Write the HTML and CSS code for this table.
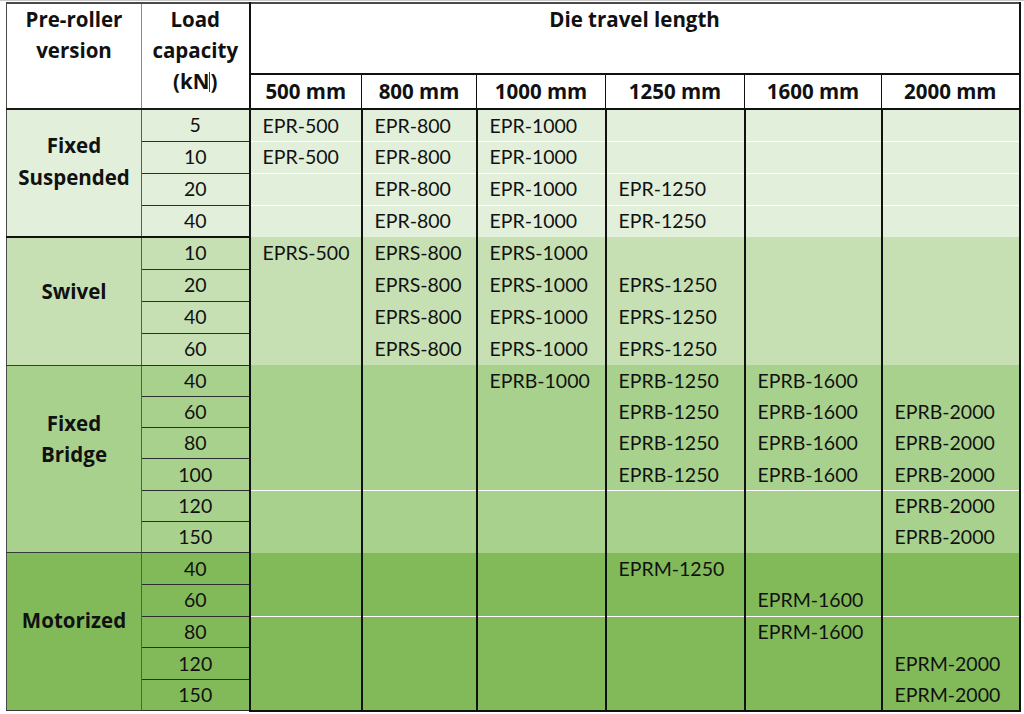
FILE: index.html
```html
<!DOCTYPE html>
<html lang="en">
<head>
<meta charset="utf-8">
<title>Pre-roller versions</title>
<link rel="stylesheet" href="styles.css">
</head>
<body>
<table class="spec">
  <colgroup>
    <col class="w-ver"><col class="w-load"><col class="w-500"><col class="w-800"><col class="w-1000"><col class="w-1250"><col class="w-1600"><col class="w-2000">
  </colgroup>
  <thead>
    <tr class="h-top">
      <th class="ver" rowspan="2">Pre-roller<br>version</th>
      <th class="cap" rowspan="2">Load<br>capacity<br>(kN<span class="caret"></span>)</th>
      <th class="die" colspan="6">Die travel length</th>
    </tr>
    <tr class="h-sub">
      <th class="sub">500 mm</th><th class="sub">800 mm</th><th class="sub">1000 mm</th><th class="sub">1250 mm</th><th class="sub">1600 mm</th><th class="sub">2000 mm</th>
    </tr>
  </thead>
  <tbody class="g1">
    <tr><th class="grp p1" rowspan="4">Fixed<br>Suspended</th><td class="ld">5</td><td class="d">EPR-500</td><td class="d">EPR-800</td><td class="d">EPR-1000</td><td class="d"></td><td class="d"></td><td class="d"></td></tr>
    <tr class="sep"><td class="ld">10</td><td class="d">EPR-500</td><td class="d">EPR-800</td><td class="d">EPR-1000</td><td class="d"></td><td class="d"></td><td class="d"></td></tr>
    <tr class="sep"><td class="ld">20</td><td class="d"></td><td class="d">EPR-800</td><td class="d">EPR-1000</td><td class="d">EPR-1250</td><td class="d"></td><td class="d"></td></tr>
    <tr class="sep"><td class="ld">40</td><td class="d"></td><td class="d">EPR-800</td><td class="d">EPR-1000</td><td class="d">EPR-1250</td><td class="d"></td><td class="d"></td></tr>
  </tbody>
  <tbody class="g2">
    <tr><th class="grp p2" rowspan="4">Swivel</th><td class="ld">10</td><td class="d">EPRS-500</td><td class="d">EPRS-800</td><td class="d">EPRS-1000</td><td class="d"></td><td class="d"></td><td class="d"></td></tr>
    <tr><td class="ld">20</td><td class="d"></td><td class="d">EPRS-800</td><td class="d">EPRS-1000</td><td class="d">EPRS-1250</td><td class="d"></td><td class="d"></td></tr>
    <tr><td class="ld">40</td><td class="d"></td><td class="d">EPRS-800</td><td class="d">EPRS-1000</td><td class="d">EPRS-1250</td><td class="d"></td><td class="d"></td></tr>
    <tr><td class="ld">60</td><td class="d"></td><td class="d">EPRS-800</td><td class="d">EPRS-1000</td><td class="d">EPRS-1250</td><td class="d"></td><td class="d"></td></tr>
  </tbody>
  <tbody class="g3">
    <tr><th class="grp p3" rowspan="6">Fixed<br>Bridge</th><td class="ld">40</td><td class="d"></td><td class="d"></td><td class="d">EPRB-1000</td><td class="d">EPRB-1250</td><td class="d">EPRB-1600</td><td class="d"></td></tr>
    <tr><td class="ld">60</td><td class="d"></td><td class="d"></td><td class="d"></td><td class="d">EPRB-1250</td><td class="d">EPRB-1600</td><td class="d">EPRB-2000</td></tr>
    <tr><td class="ld">80</td><td class="d"></td><td class="d"></td><td class="d"></td><td class="d">EPRB-1250</td><td class="d">EPRB-1600</td><td class="d">EPRB-2000</td></tr>
    <tr><td class="ld">100</td><td class="d"></td><td class="d"></td><td class="d"></td><td class="d">EPRB-1250</td><td class="d">EPRB-1600</td><td class="d">EPRB-2000</td></tr>
    <tr class="sep"><td class="ld">120</td><td class="d"></td><td class="d"></td><td class="d"></td><td class="d"></td><td class="d"></td><td class="d">EPRB-2000</td></tr>
    <tr><td class="ld">150</td><td class="d"></td><td class="d"></td><td class="d"></td><td class="d"></td><td class="d"></td><td class="d">EPRB-2000</td></tr>
  </tbody>
  <tbody class="g4">
    <tr><th class="grp p4" rowspan="5">Motorized</th><td class="ld">40</td><td class="d"></td><td class="d"></td><td class="d"></td><td class="d">EPRM-1250</td><td class="d"></td><td class="d"></td></tr>
    <tr><td class="ld">60</td><td class="d"></td><td class="d"></td><td class="d"></td><td class="d"></td><td class="d">EPRM-1600</td><td class="d"></td></tr>
    <tr class="sep"><td class="ld">80</td><td class="d"></td><td class="d"></td><td class="d"></td><td class="d"></td><td class="d">EPRM-1600</td><td class="d"></td></tr>
    <tr><td class="ld">120</td><td class="d"></td><td class="d"></td><td class="d"></td><td class="d"></td><td class="d"></td><td class="d">EPRM-2000</td></tr>
    <tr><td class="ld">150</td><td class="d"></td><td class="d"></td><td class="d"></td><td class="d"></td><td class="d"></td><td class="d">EPRM-2000</td></tr>
  </tbody>
</table>
</body>
</html>
```

FILE: styles.css
```css
html, body {
  margin: 0;
  padding: 0;
  background: #ffffff;
}

body {
  border-top: 1px solid #c9c9c9;
  font-family: Lato, "Open Sans", "Liberation Sans", sans-serif;
  color: #111111;
}

.spec {
  border-collapse: collapse;
  table-layout: fixed;
  width: 1014px;
  margin: 1px 0 0 6px;
}

.w-ver { width: 135px; }
.w-load { width: 108px; }
.w-500 { width: 112px; }
.w-800 { width: 115px; }
.w-1000 { width: 129px; }
.w-1250 { width: 139px; }
.w-1600 { width: 137px; }
.w-2000 { width: 138px; }

th, td {
  padding: 0;
  font-size: 19.5px;
  line-height: 20px;
}

/* header */
thead th {
  background: #ffffff;
  font-family: "Open Sans", Lato, sans-serif;
  font-weight: 700;
  font-size: 20.5px;
  line-height: 31px;
  text-align: center;
  color: #111;
}

.h-top { height: 71px; }
.h-sub { height: 35px; }

.ver, .cap {
  vertical-align: top;
  border-top: 2px solid #4a4a4a;
  border-bottom: 2px solid #1a1a1a;
}

.ver {
  border-left: 1px solid #4a4a4a;
  border-right: 1px solid #8a8a8a;
}

.cap {
  border-right: 2px solid #111;
}

.die {
  vertical-align: top;
  border-top: 2px solid #4a4a4a;
  border-right: 2px solid #111;
  border-bottom: 2px solid #111;
}

.sub {
  vertical-align: middle;
  border-left: 1px solid #111;
  border-right: 1px solid #111;
  border-bottom: 2px solid #111;
}

.sub:last-child {
  border-right: 2px solid #111;
}

.caret {
  display: inline-block;
  width: 0;
  height: 20px;
  border-left: 1px solid #3c3c3c;
  vertical-align: -3px;
}

/* body */
.g1 tr, .g2 tr { height: 32px; }
.g3 tr { height: 31.33px; }
.g4 tr { height: 31.6px; }

.g1 th, .g1 td { background-color: #e2efda; }
.g2 th, .g2 td { background-color: #c6e0b4; }
.g3 th, .g3 td { background-color: #a9d18e; }
.g4 th, .g4 td { background-color: #82ba5a; }

.grp {
  font-family: "Open Sans", Lato, sans-serif;
  font-weight: 700;
  font-size: 20.5px;
  line-height: 31.5px;
  text-align: center;
  vertical-align: top;
  border-left: 1px solid #4a4a4a;
  border-right: 1px solid #5a5a5a;
  border-bottom: 1px solid #3a3a3a;
}

.g1 .grp { border-bottom: 2px solid #111; }

.p1 { padding-top: 20px; }
.p2 { padding-top: 38px; }
.p3 { padding-top: 42px; }
.p4 { padding-top: 52px; }

.ld {
  text-align: center;
  vertical-align: middle;
  border-bottom: 1px solid #2e2e2e;
  border-right: 2px solid #111;
}

.g1 tr:last-child .ld { border-bottom: 2px solid #111; }

.d {
  text-align: left;
  vertical-align: middle;
  padding-left: 12px;
  border-left: 2px solid #111;
  border-right: 2px solid #111;
  white-space: nowrap;
}

.sep .d {
  background-image: linear-gradient(#ffffff, #ffffff);
  background-size: 100% 1px;
  background-repeat: no-repeat;
  background-position: top left;
}

.g4 tr:last-child .d { border-bottom: 2px solid #111; }
```
